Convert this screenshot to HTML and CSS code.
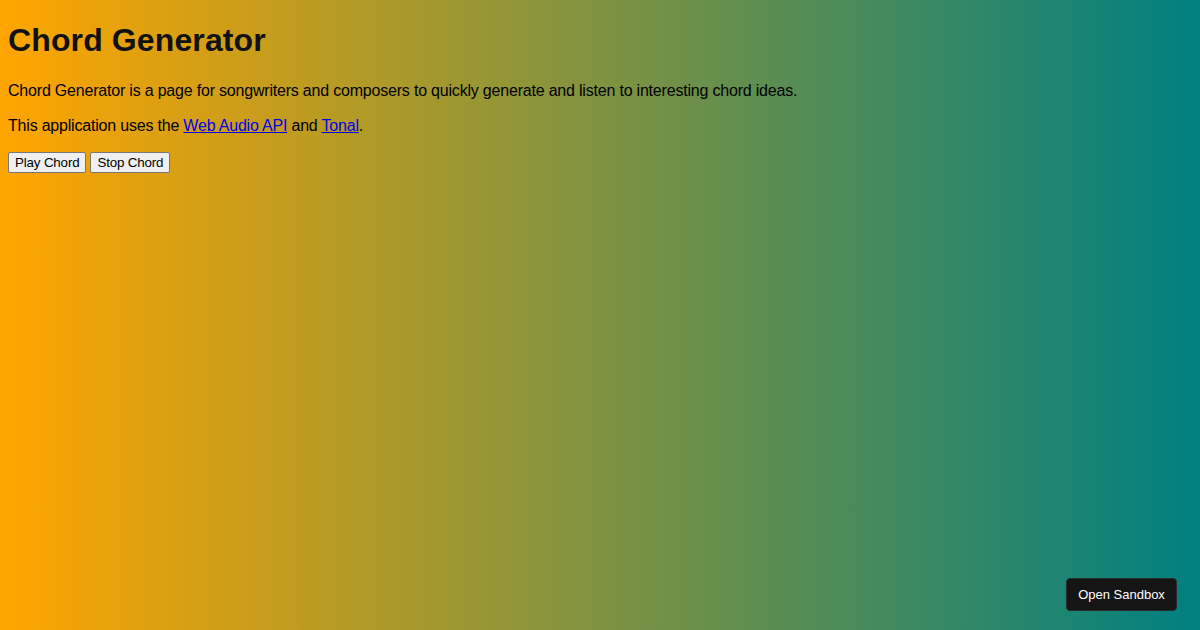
FILE: index.html
```html
<!DOCTYPE html>
<html lang="en">
<head>
<meta charset="utf-8">
<title>Chord Generator</title>
<link rel="stylesheet" href="styles.css">
</head>
<body>
<h1 class="title">Chord Generator</h1>
<p class="text">Chord Generator is a page for songwriters and composers to quickly generate and listen to interesting chord ideas.</p>
<p class="text">This application uses the <a class="link" href="#">Web Audio API</a> and <a class="link" href="#">Tonal</a>.</p>
<div class="controls">
  <button class="btn" type="button">Play Chord</button>
  <button class="btn" type="button">Stop Chord</button>
</div>
<a class="sandbox" href="#">Open Sandbox</a>
</body>
</html>
```
FILE: styles.css
```css
html {
  min-height: 100%;
  background: linear-gradient(to right, #ffa500, #008080);
}
body {
  margin: 8px;
  font-family: "Liberation Sans", Arial, sans-serif;
  color: #000;
}
.title {
  font-size: 32px;
  font-weight: bold;
  letter-spacing: 0.12px;
  margin: 14px 0 22px;
  color: #111;
}
.text {
  font-size: 16px;
  line-height: 19px;
  letter-spacing: -0.2px;
  margin: 16px 0;
}
.link {
  color: #0000ee;
}
.controls {
  display: flex;
  gap: 4px;
  margin-top: 17px;
}
.btn {
  font-family: "Liberation Sans", Arial, sans-serif;
  font-size: 13.333px;
  letter-spacing: -0.15px;
  padding: 2px 6px;
  background: #efefef;
  border: 1px solid #767676;
  border-radius: 2px;
  color: #000;
}
.sandbox {
  position: fixed;
  right: 23px;
  bottom: 19px;
  width: 111px;
  height: 33px;
  box-sizing: border-box;
  display: flex;
  align-items: center;
  justify-content: center;
  background: #151515;
  border: 1px solid #2a2a2a;
  border-radius: 4px;
  color: #fff;
  font-size: 13px;
  text-decoration: none;
}
```
